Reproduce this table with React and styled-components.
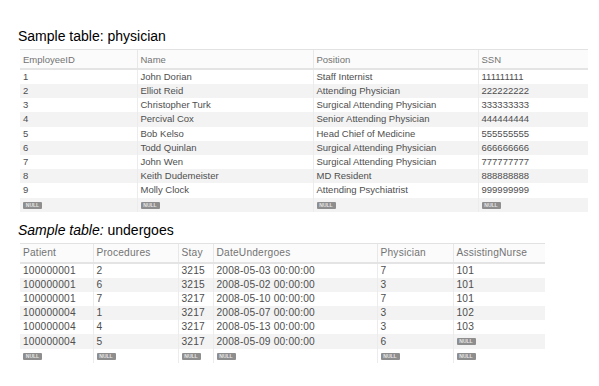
import styled, { createGlobalStyle } from 'styled-components';

const GlobalStyle = createGlobalStyle`
  body {
    margin: 0;
    background: #fff;
    font-family: "Liberation Sans", Arial, sans-serif;
  }
`;

const physicians = [
  ['1', 'John Dorian', 'Staff Internist', '111111111'],
  ['2', 'Elliot Reid', 'Attending Physician', '222222222'],
  ['3', 'Christopher Turk', 'Surgical Attending Physician', '333333333'],
  ['4', 'Percival Cox', 'Senior Attending Physician', '444444444'],
  ['5', 'Bob Kelso', 'Head Chief of Medicine', '555555555'],
  ['6', 'Todd Quinlan', 'Surgical Attending Physician', '666666666'],
  ['7', 'John Wen', 'Surgical Attending Physician', '777777777'],
  ['8', 'Keith Dudemeister', 'MD Resident', '888888888'],
  ['9', 'Molly Clock', 'Attending Psychiatrist', '999999999'],
  [null, null, null, null],
];

const undergoes = [
  ['100000001', '2', '3215', '2008-05-03 00:00:00', '7', '101'],
  ['100000001', '6', '3215', '2008-05-02 00:00:00', '3', '101'],
  ['100000001', '7', '3217', '2008-05-10 00:00:00', '7', '101'],
  ['100000004', '1', '3217', '2008-05-07 00:00:00', '3', '102'],
  ['100000004', '4', '3217', '2008-05-13 00:00:00', '3', '103'],
  ['100000004', '5', '3217', '2008-05-09 00:00:00', '6', null],
  [null, null, null, null, null, null],
];

function App() {
  return (
    <>
      <GlobalStyle />
      <Page>
        <Title>Sample table: physician</Title>
        <DataTable
          widths={[117, 176, 165, 110]}
          headers={['EmployeeID', 'Name', 'Position', 'SSN']}
          rows={physicians}
          size={9.5}
        />
        <Title $gap={10}>
          <em>Sample table:</em> undergoes
        </Title>
        <DataTable
          widths={[73, 85, 35, 164, 76, 92]}
          headers={['Patient', 'Procedures', 'Stay', 'DateUndergoes', 'Physician', 'AssistingNurse']}
          rows={undergoes}
          size={10.2}
          spacing={0.2}
        />
      </Page>
    </>
  );
}

function DataTable({ widths, headers, rows, size, spacing = 0 }) {
  const total = widths.reduce((a, b) => a + b, 0);
  return (
    <Table $size={size} $spacing={spacing} style={{ width: total }}>
      <colgroup>
        {widths.map((w, i) => (
          <col key={i} style={{ width: w }} />
        ))}
      </colgroup>
      <thead>
        <tr>
          {headers.map((h) => (
            <Th key={h}>{h}</Th>
          ))}
        </tr>
      </thead>
      <tbody>
        {rows.map((row, r) => (
          <Row key={r} $striped={r % 2 === 1}>
            {row.map((cell, c) => (
              <Td key={c}>{cell === null ? <NullBadge>NULL</NullBadge> : cell}</Td>
            ))}
          </Row>
        ))}
      </tbody>
    </Table>
  );
}

const Page = styled.div`
  padding: 28px 0 0 18px;
`;

const Title = styled.div`
  font-size: 14px;
  line-height: 16px;
  height: 16px;
  color: #000;
  margin: ${(p) => p.$gap || 0}px 0 5px;

  em {
    font-style: italic;
  }
`;

const Table = styled.table`
  margin-left: 2px;
  border-collapse: collapse;
  table-layout: fixed;
  font-size: ${(p) => p.$size}px;
  letter-spacing: ${(p) => p.$spacing}px;
  color: #4e4e4e;
`;

const Th = styled.th`
  height: 18px;
  padding: 0 3px;
  text-align: left;
  font-weight: normal;
  color: #737373;
  background: #fbfbfb;
  border-top: 1px solid #e2e2e2;
  border-bottom: 2px solid #e4e4e4;
  border-left: 1px solid #e8e8e8;
  white-space: nowrap;
  overflow: hidden;

  &:first-child {
    border-left: none;
  }
`;

const Row = styled.tr`
  height: 14.2px;
  background: ${(p) => (p.$striped ? '#f3f3f3' : '#fff')};
`;

const Td = styled.td`
  padding: 0 3px;
  line-height: 14px;
  white-space: nowrap;
  overflow: hidden;
  border-left: 1px solid #ececec;

  &:first-child {
    border-left: none;
  }
`;

const NullBadge = styled.span`
  display: inline-block;
  vertical-align: middle;
  width: 19px;
  height: 7px;
  line-height: 7px;
  letter-spacing: 0;
  background: #8e8e8e;
  color: #e6e6e6;
  font-size: 5px;
  font-weight: bold;
  text-align: center;
  border-radius: 1px;
`;

export default App;
